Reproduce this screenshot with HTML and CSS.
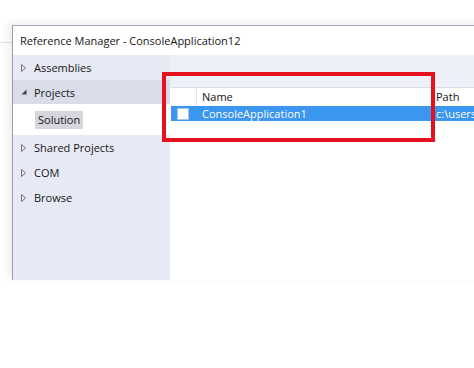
FILE: index.html
```html
<!DOCTYPE html>
<html lang="en">
<head>
  <meta charset="UTF-8">
  <title>Reference Manager</title>
  <link rel="stylesheet" href="styles.css">
</head>
<body>

  <div class="screen">
    <div class="window">
      <div class="titlebar">Reference Manager - ConsoleApplication12</div>

      <div class="content">
        <nav class="nav">
          <div class="nav-item">
            <svg class="arrow" width="6" height="8" viewBox="0 0 6 8"><path d="M0.5 0.5 L4.5 4 L0.5 7.5 Z" fill="none" stroke="#707070"/></svg>
            <span>Assemblies</span>
          </div>
          <div class="nav-item active">
            <svg class="arrow" width="6" height="8" viewBox="0 0 6 8"><path d="M5.5 1.5 L5.5 6.5 L0.5 6.5 Z" fill="#404040"/></svg>
            <span>Projects</span>
          </div>
          <div class="nav-children">
            <span class="child">Solution</span>
          </div>
          <div class="nav-item">
            <svg class="arrow" width="6" height="8" viewBox="0 0 6 8"><path d="M0.5 0.5 L4.5 4 L0.5 7.5 Z" fill="none" stroke="#707070"/></svg>
            <span>Shared Projects</span>
          </div>
          <div class="nav-item">
            <svg class="arrow" width="6" height="8" viewBox="0 0 6 8"><path d="M0.5 0.5 L4.5 4 L0.5 7.5 Z" fill="none" stroke="#707070"/></svg>
            <span>COM</span>
          </div>
          <div class="nav-item">
            <svg class="arrow" width="6" height="8" viewBox="0 0 6 8"><path d="M0.5 0.5 L4.5 4 L0.5 7.5 Z" fill="none" stroke="#707070"/></svg>
            <span>Browse</span>
          </div>
        </nav>

        <div class="main">
          <div class="toolbar"></div>
          <div class="grid">
            <div class="row head">
              <div class="cell check"></div>
              <div class="cell name">Name</div>
              <div class="cell path">Path</div>
            </div>
            <div class="row selected">
              <div class="cell check"><span class="box"></span></div>
              <div class="cell name">ConsoleApplication1</div>
              <div class="cell path">c:\users</div>
            </div>
          </div>
        </div>
      </div>
    </div>

    <div class="callout"></div>
  </div>

</body>
</html>
```

FILE: styles.css
```css
body {
  margin: 0;
  background: #ffffff;
  font-family: 'Segoe UI', 'Open Sans', sans-serif;
  font-size: 11px;
  color: #161616;
}

.screen {
  position: relative;
  width: 474px;
  height: 368px;
  overflow: hidden;
  background: linear-gradient(#e4e4e4, #e4e4e4) 0 42px / 12px 1px no-repeat, #ffffff;
}

.window {
  width: 480px;
  height: 254px;
  margin: 25px 0 0 12px;
  border-top: 1px solid #a3aabd;
  border-left: 1px solid #959cb4;
  background: #ffffff;
  box-shadow: -4px -2px 8px rgba(0,0,0,0.07);
}

.titlebar {
  height: 29px;
  line-height: 29px;
  padding-left: 7px;
}

.content {
  display: flex;
  height: 225px;
}

.nav {
  width: 157px;
  background: #e7eaf5;
}

.nav-item {
  display: flex;
  align-items: center;
  height: 25px;
  padding-left: 8px;
}

.nav-item.active {
  height: 24px;
  background: #d9dde9;
}

.arrow {
  margin-right: 7px;
}

.nav-children {
  height: 31px;
  padding: 7px 0 0 22px;
  box-sizing: border-box;
  background: #ffffff;
}

.child {
  display: inline-block;
  height: 18px;
  line-height: 18px;
  padding: 0 3px;
  background: #d6d7de;
}

.main {
  flex: 1;
  min-width: 0;
}

.toolbar {
  height: 32px;
  background: #edf0f7;
}

.grid {
  margin-left: 1px;
}

.row {
  display: flex;
}

.row.head {
  height: 18px;
  border-top: 1px solid #dadde3;
  line-height: 18px;
}

.row.selected {
  height: 15px;
  line-height: 15px;
  background: #3a96ee;
  color: #ffffff;
}

.cell.check {
  width: 26px;
  display: flex;
  align-items: center;
}

.row.head .cell.check {
  border-right: 1px solid #e2e4e8;
  width: 25px;
}

.cell.name {
  width: 230px;
  padding-left: 5px;
}

.cell.path {
  padding-left: 4px;
  white-space: nowrap;
}

.box {
  width: 10px;
  height: 10px;
  margin-left: 6px;
  border: 1px solid #9fc7f0;
  background: #ffffff;
}

.callout {
  position: absolute;
  left: 162px;
  top: 72px;
  width: 273px;
  height: 70px;
  box-sizing: border-box;
  border: 4px solid #e5111f;
}
```
